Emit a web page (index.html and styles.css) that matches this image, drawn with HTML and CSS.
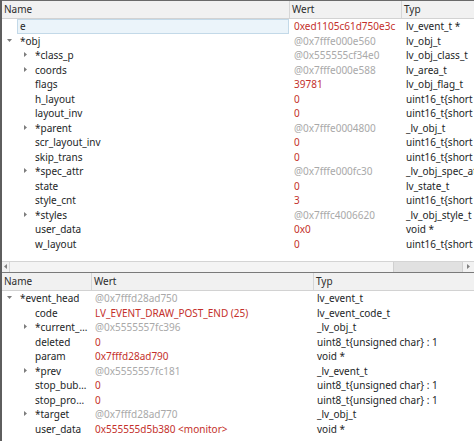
FILE: index.html
```html
<!DOCTYPE html>
<html lang="de">

<head>
    <meta charset="UTF-8">
    <meta name="viewport" content="width=device-width, initial-scale=1.0">
    <title>Lokale Variablen</title>
    <link rel="stylesheet" href="styles.css">
</head>

<body>
    <div class="window">
        <div class="view top-view">
            <div class="header">
                <div class="hcell">Name</div>
                <div class="hcell">Wert</div>
                <div class="hcell">Typ</div>
            </div>
            <div class="rows">
                <div class="row">
                    <div class="cell name"><span class="tw"></span><span class="label current">e</span></div>
                    <div class="cell value changed">0xed1105c61d750e3c</div>
                    <div class="cell type">lv_event_t *</div>
                </div>
                <div class="row">
                    <div class="cell name"><span class="tw"><svg class="open" width="6" height="4"><path d="M0 0h5l-2.5 3z" /></svg></span><span class="label">*obj</span></div>
                    <div class="cell value addr">@0x7fffe000e560</div>
                    <div class="cell type">lv_obj_t</div>
                </div>
                <div class="row">
                    <div class="cell name child"><span class="tw"><svg class="closed" width="5" height="6"><path d="M1 0l3 2.5L1 5z" /></svg></span><span class="label">*class_p</span></div>
                    <div class="cell value addr">@0x555555cf34e0</div>
                    <div class="cell type">lv_obj_class_t</div>
                </div>
                <div class="row">
                    <div class="cell name child"><span class="tw"><svg class="closed" width="5" height="6"><path d="M1 0l3 2.5L1 5z" /></svg></span><span class="label">coords</span></div>
                    <div class="cell value addr">@0x7fffe000e588</div>
                    <div class="cell type">lv_area_t</div>
                </div>
                <div class="row">
                    <div class="cell name child"><span class="tw"></span><span class="label">flags</span></div>
                    <div class="cell value changed">39781</div>
                    <div class="cell type">lv_obj_flag_t</div>
                </div>
                <div class="row">
                    <div class="cell name child"><span class="tw"></span><span class="label">h_layout</span></div>
                    <div class="cell value changed">0</div>
                    <div class="cell type">uint16_t{short unsigned int} : 1</div>
                </div>
                <div class="row">
                    <div class="cell name child"><span class="tw"></span><span class="label">layout_inv</span></div>
                    <div class="cell value changed">0</div>
                    <div class="cell type">uint16_t{short unsigned int} : 1</div>
                </div>
                <div class="row">
                    <div class="cell name child"><span class="tw"><svg class="closed" width="5" height="6"><path d="M1 0l3 2.5L1 5z" /></svg></span><span class="label">*parent</span></div>
                    <div class="cell value addr">@0x7fffe0004800</div>
                    <div class="cell type">_lv_obj_t</div>
                </div>
                <div class="row">
                    <div class="cell name child"><span class="tw"></span><span class="label">scr_layout_inv</span></div>
                    <div class="cell value changed">0</div>
                    <div class="cell type">uint16_t{short unsigned int} : 1</div>
                </div>
                <div class="row">
                    <div class="cell name child"><span class="tw"></span><span class="label">skip_trans</span></div>
                    <div class="cell value changed">0</div>
                    <div class="cell type">uint16_t{short unsigned int} : 1</div>
                </div>
                <div class="row">
                    <div class="cell name child"><span class="tw"><svg class="closed" width="5" height="6"><path d="M1 0l3 2.5L1 5z" /></svg></span><span class="label">*spec_attr</span></div>
                    <div class="cell value addr">@0x7fffe000fc30</div>
                    <div class="cell type">_lv_obj_spec_attr_t</div>
                </div>
                <div class="row">
                    <div class="cell name child"><span class="tw"></span><span class="label">state</span></div>
                    <div class="cell value changed">0</div>
                    <div class="cell type">lv_state_t</div>
                </div>
                <div class="row">
                    <div class="cell name child"><span class="tw"></span><span class="label">style_cnt</span></div>
                    <div class="cell value changed">3</div>
                    <div class="cell type">uint16_t{short unsigned int} : 6</div>
                </div>
                <div class="row">
                    <div class="cell name child"><span class="tw"><svg class="closed" width="5" height="6"><path d="M1 0l3 2.5L1 5z" /></svg></span><span class="label">*styles</span></div>
                    <div class="cell value addr">@0x7fffc4006620</div>
                    <div class="cell type">_lv_obj_style_t</div>
                </div>
                <div class="row">
                    <div class="cell name child"><span class="tw"></span><span class="label">user_data</span></div>
                    <div class="cell value changed">0x0</div>
                    <div class="cell type">void *</div>
                </div>
                <div class="row">
                    <div class="cell name child"><span class="tw"></span><span class="label">w_layout</span></div>
                    <div class="cell value changed">0</div>
                    <div class="cell type">uint16_t{short unsigned int} : 1</div>
                </div>
            </div>
            <div class="hscroll">
                <div class="sb-btn"><svg width="4" height="6"><path d="M3 0v5L0 2.5z" /></svg></div>
                <div class="sb-handle"></div>
                <div class="sb-groove"></div>
                <div class="sb-btn right"><svg width="4" height="6"><path d="M0 0l3 2.5L0 5z" /></svg></div>
            </div>
        </div>

        <div class="view bottom-view">
            <div class="header">
                <div class="hcell">Name</div>
                <div class="hcell">Wert</div>
                <div class="hcell">Typ</div>
            </div>
            <div class="rows">
                <div class="row">
                    <div class="cell name"><span class="tw"><svg class="open" width="6" height="4"><path d="M0 0h5l-2.5 3z" /></svg></span><span class="label">*event_head</span></div>
                    <div class="cell value addr">@0x7fffd28ad750</div>
                    <div class="cell type">lv_event_t</div>
                </div>
                <div class="row">
                    <div class="cell name child"><span class="tw"></span><span class="label">code</span></div>
                    <div class="cell value changed">LV_EVENT_DRAW_POST_END (25)</div>
                    <div class="cell type">lv_event_code_t</div>
                </div>
                <div class="row">
                    <div class="cell name child"><span class="tw"><svg class="closed" width="5" height="6"><path d="M1 0l3 2.5L1 5z" /></svg></span><span class="label">*current_…</span></div>
                    <div class="cell value addr">@0x5555557fc396</div>
                    <div class="cell type">_lv_obj_t</div>
                </div>
                <div class="row">
                    <div class="cell name child"><span class="tw"></span><span class="label">deleted</span></div>
                    <div class="cell value changed">0</div>
                    <div class="cell type">uint8_t{unsigned char} : 1</div>
                </div>
                <div class="row">
                    <div class="cell name child"><span class="tw"></span><span class="label">param</span></div>
                    <div class="cell value changed">0x7fffd28ad790</div>
                    <div class="cell type">void *</div>
                </div>
                <div class="row">
                    <div class="cell name child"><span class="tw"><svg class="closed" width="5" height="6"><path d="M1 0l3 2.5L1 5z" /></svg></span><span class="label">*prev</span></div>
                    <div class="cell value addr">@0x5555557fc181</div>
                    <div class="cell type">_lv_event_t</div>
                </div>
                <div class="row">
                    <div class="cell name child"><span class="tw"></span><span class="label">stop_bub…</span></div>
                    <div class="cell value changed">0</div>
                    <div class="cell type">uint8_t{unsigned char} : 1</div>
                </div>
                <div class="row">
                    <div class="cell name child"><span class="tw"></span><span class="label">stop_pro…</span></div>
                    <div class="cell value changed">0</div>
                    <div class="cell type">uint8_t{unsigned char} : 1</div>
                </div>
                <div class="row">
                    <div class="cell name child"><span class="tw"><svg class="closed" width="5" height="6"><path d="M1 0l3 2.5L1 5z" /></svg></span><span class="label">*target</span></div>
                    <div class="cell value addr">@0x7fffd28ad770</div>
                    <div class="cell type">_lv_obj_t</div>
                </div>
                <div class="row">
                    <div class="cell name child"><span class="tw"></span><span class="label">user_data</span></div>
                    <div class="cell value changed">0x555555d5b380 &lt;monitor&gt;</div>
                    <div class="cell type">void *</div>
                </div>
            </div>
        </div>
    </div>
</body>

</html>
```

FILE: styles.css
```css
* {
    padding: 0;
    margin: 0;
    box-sizing: border-box;
}

html,
body {
    width: 100%;
    height: 100%;
    background-color: #fff;
    overflow: hidden;
}

body {
    font-family: "Noto Sans", "Open Sans", sans-serif;
    font-size: 10px;
    color: #232627;
}

.window {
    height: 441px;
    border-left: 2px solid #5e5e5e;
    display: flex;
    flex-direction: column;
}

.view {
    display: flex;
    flex-direction: column;
    overflow: hidden;
}

.top-view {
    height: 272px;
    border-top: 1px solid #6a6a6a;
}

.bottom-view {
    flex: 1;
    border-top: 1px solid #7a7a7a;
}

/* columns */
.top-view .header,
.top-view .row {
    display: grid;
    grid-template-columns: 288px 112px 1fr;
}

.bottom-view .header,
.bottom-view .row {
    display: grid;
    grid-template-columns: 90px 222px 1fr;
}

.header {
    height: 18px;
    background-color: #f1f1f1;
    border-bottom: 1px solid #d2d2d2;
    line-height: 17px;
    color: #2c2c2c;
}

.header .hcell {
    padding-left: 2px;
    border-right: 1px solid #d6d6d6;
    white-space: nowrap;
    overflow: hidden;
}

.header .hcell:last-child {
    border-right: none;
}

.rows {
    flex: 1;
}

.row {
    height: 14.5px;
    line-height: 14.5px;
}

.cell {
    white-space: nowrap;
    overflow: hidden;
}

.cell.name {
    display: flex;
    padding-left: 3px;
}

.cell.name.child {
    padding-left: 18px;
}

.cell.value,
.cell.type {
    padding-left: 4px;
}

.bottom-view .cell.value {
    padding-left: 3px;
}

.bottom-view .cell.type {
    padding-left: 3px;
}

.tw {
    width: 12px;
    flex: none;
    display: flex;
    align-items: center;
    padding-left: 2px;
}

.tw svg {
    fill: #7c7c7c;
}

.tw svg.closed {
    margin-left: 1px;
}

.label {
    padding-left: 3px;
}

.label.current {
    flex: 1;
    margin-right: 1px;
    background-color: #ebf4fa;
    border: 1px solid #c3d9e8;
    padding-left: 2px;
    line-height: 13px;
    height: 15px;
}

.changed {
    color: #c4302b;
}

.addr {
    color: #a9a9a9;
}

/* horizontal scrollbar */
.hscroll {
    height: 11px;
    margin-bottom: 0;
    display: flex;
    background-color: #f2f2f2;
    border-top: 1px solid #d4d4d4;
}

.sb-btn {
    width: 8px;
    display: flex;
    align-items: center;
    justify-content: center;
    border-right: 1px solid #d6d6d6;
}

.sb-btn.right {
    width: 12px;
    border-right: none;
    border-left: 1px solid #cfcfcf;
}

.sb-btn svg {
    fill: #808080;
}

.sb-handle {
    width: 383px;
    background-color: #f4f4f4;
}

.sb-groove {
    flex: 1;
    background-color: #e1e1e1;
    border-left: 1px solid #d0d0d0;
}
```
